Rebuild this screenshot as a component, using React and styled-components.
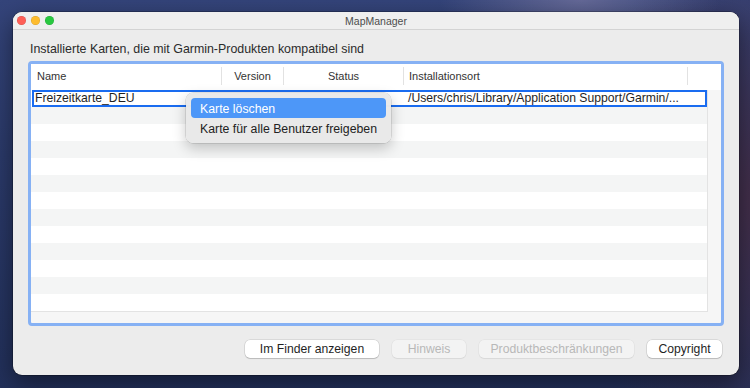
import React from "react";
import styled, { createGlobalStyle } from "styled-components";

const GlobalStyle = createGlobalStyle`
  html, body {
    margin: 0;
    padding: 0;
  }
  body {
    font-family: "Liberation Sans", Arial, sans-serif;
    -webkit-font-smoothing: antialiased;
  }
`;

const Desktop = styled.div`
  width: 750px;
  height: 388px;
  overflow: hidden;
  box-sizing: border-box;
  padding: 12px 11px 0 13px;
  background:
    radial-gradient(ellipse 140px 60px at 580px 0px, rgba(140, 135, 175, 0.55), transparent),
    radial-gradient(ellipse 200px 260px at 760px 200px, rgba(70, 45, 70, 0.9), transparent),
    linear-gradient(180deg, #34447a 0%, #2b3a6a 40%, #22305a 100%);
`;

const Window = styled.div`
  width: 726px;
  height: 363px;
  background: #ececec;
  border-radius: 9px;
  box-shadow: 0 0 0 0.5px rgba(0, 0, 0, 0.45), 0 8px 24px rgba(0, 0, 0, 0.45);
  display: flex;
  flex-direction: column;
  overflow: hidden;
`;

const TitleBar = styled.div`
  height: 17px;
  flex: 0 0 auto;
  display: flex;
  align-items: center;
  padding-left: 4px;
  gap: 5px;
  background: #efefef;
  border-bottom: 1px solid #d3d3d3;
  position: relative;
`;

const Light = styled.span`
  width: 9px;
  height: 9px;
  border-radius: 50%;
  background: ${(p) => p.color};
  box-shadow: inset 0 0 0 0.5px rgba(0, 0, 0, 0.15);
`;

const Title = styled.div`
  position: absolute;
  left: 0;
  right: 0;
  top: 0;
  bottom: 0;
  display: flex;
  align-items: center;
  justify-content: center;
  font-size: 10.5px;
  color: #4d4d4d;
  pointer-events: none;
`;

const Content = styled.div`
  flex: 1;
  display: flex;
  flex-direction: column;
  padding: 11px 15px 0 15px;
`;

const Caption = styled.div`
  font-size: 12.4px;
  line-height: 16px;
  color: #2b2b2b;
  padding-left: 2px;
  margin-bottom: 4px;
`;

const TableFrame = styled.div`
  position: relative;
  height: 265px;
  box-sizing: border-box;
  border: 3px solid #86b1f4;
  border-radius: 4px;
  background: #f6f6f6;
  display: flex;
  flex-direction: column;
`;

const columns = "190px 62px 120px 284px 1fr";

const Header = styled.div`
  height: 26px;
  flex: 0 0 auto;
  display: grid;
  grid-template-columns: ${columns};
  background: #ffffff;
`;

const HeadCell = styled.div`
  display: flex;
  align-items: center;
  justify-content: ${(p) => (p.center ? "center" : "flex-start")};
  padding: 0 5px 2px 6px;
  font-size: 11px;
  color: #333;
  position: relative;
  &:not(:first-child)::before {
    content: "";
    position: absolute;
    left: 0;
    top: 3px;
    bottom: 5px;
    width: 1px;
    background: #e2e2e2;
  }
`;

const Body = styled.div`
  width: 676px;
  border-right: 1px solid #e3e3e3;
  border-bottom: 1px solid #e3e3e3;
  background: #fff;
`;

const Row = styled.div`
  height: 17px;
  box-sizing: border-box;
  display: grid;
  grid-template-columns: ${columns};
  background: ${(p) => (p.striped ? "#f4f5f5" : "#ffffff")};
  ${(p) => p.selected && "box-shadow: inset 0 0 0 2px #1a6cf0; margin-left: 1px;"}
`;

const Cell = styled.div`
  font-size: 12.2px;
  line-height: 17px;
  color: #1f1f1f;
  padding-left: ${(p) => p.pad || 4}px;
  white-space: nowrap;
  overflow: hidden;
`;

const Menu = styled.div`
  position: absolute;
  left: 155px;
  top: 29px;
  width: 205px;
  box-sizing: border-box;
  padding: 5px;
  background: rgba(233, 233, 233, 0.98);
  border-radius: 7px;
  box-shadow: 0 0 0 0.5px rgba(0, 0, 0, 0.18), 0 5px 14px rgba(0, 0, 0, 0.22);
  display: flex;
  flex-direction: column;
`;

const MenuItem = styled.div`
  height: 20px;
  display: flex;
  align-items: center;
  padding: 1px 0 0 9px;
  box-sizing: border-box;
  border-radius: 4px;
  font-size: 12.3px;
  color: ${(p) => (p.active ? "#ffffff" : "#222")};
  background: ${(p) => (p.active ? "#4d97f8" : "transparent")};
`;

const Footer = styled.div`
  display: flex;
  justify-content: flex-end;
  gap: 13px;
  padding: 14px 2px 0 0;
`;

const Button = styled.button`
  width: ${(p) => p.width}px;
  height: 18px;
  border: 0;
  padding: 0;
  border-radius: 5px;
  font-family: inherit;
  font-size: 12.2px;
  color: #1f1f1f;
  background: #ffffff;
  box-shadow: 0 0 0 0.5px rgba(0, 0, 0, 0.16), 0 1px 1px rgba(0, 0, 0, 0.14);
  &:disabled {
    color: #b8b8b8;
    background: #f3f3f3;
    box-shadow: 0 0 0 0.5px rgba(0, 0, 0, 0.06), 0 1px 1px rgba(0, 0, 0, 0.05);
  }
`;

const rows = Array.from({ length: 13 });

export default function App() {
  return (
    <>
      <GlobalStyle />
      <Desktop>
        <Window>
          <TitleBar>
            <Light color="#fe5f57" />
            <Light color="#febc2e" />
            <Light color="#28c840" />
            <Title>MapManager</Title>
          </TitleBar>
          <Content>
            <Caption>Installierte Karten, die mit Garmin-Produkten kompatibel sind</Caption>
            <TableFrame>
              <Header>
                <HeadCell>Name</HeadCell>
                <HeadCell center>Version</HeadCell>
                <HeadCell center>Status</HeadCell>
                <HeadCell>Installationsort</HeadCell>
                <HeadCell />
              </Header>
              <Body>
                {rows.map((_, i) =>
                  i === 0 ? (
                    <Row key={i} selected>
                      <Cell pad={3}>Freizeitkarte_DEU</Cell>
                      <Cell />
                      <Cell />
                      <Cell>/Users/chris/Library/Application Support/Garmin/...</Cell>
                    </Row>
                  ) : (
                    <Row key={i} striped={i % 2 === 1} />
                  )
                )}
              </Body>
              <Menu>
                <MenuItem active>Karte löschen</MenuItem>
                <MenuItem>Karte für alle Benutzer freigeben</MenuItem>
              </Menu>
            </TableFrame>
            <Footer>
              <Button width={134}>Im Finder anzeigen</Button>
              <Button width={74} disabled>Hinweis</Button>
              <Button width={155} disabled>Produktbeschränkungen</Button>
              <Button width={75}>Copyright</Button>
            </Footer>
          </Content>
        </Window>
      </Desktop>
    </>
  );
}
